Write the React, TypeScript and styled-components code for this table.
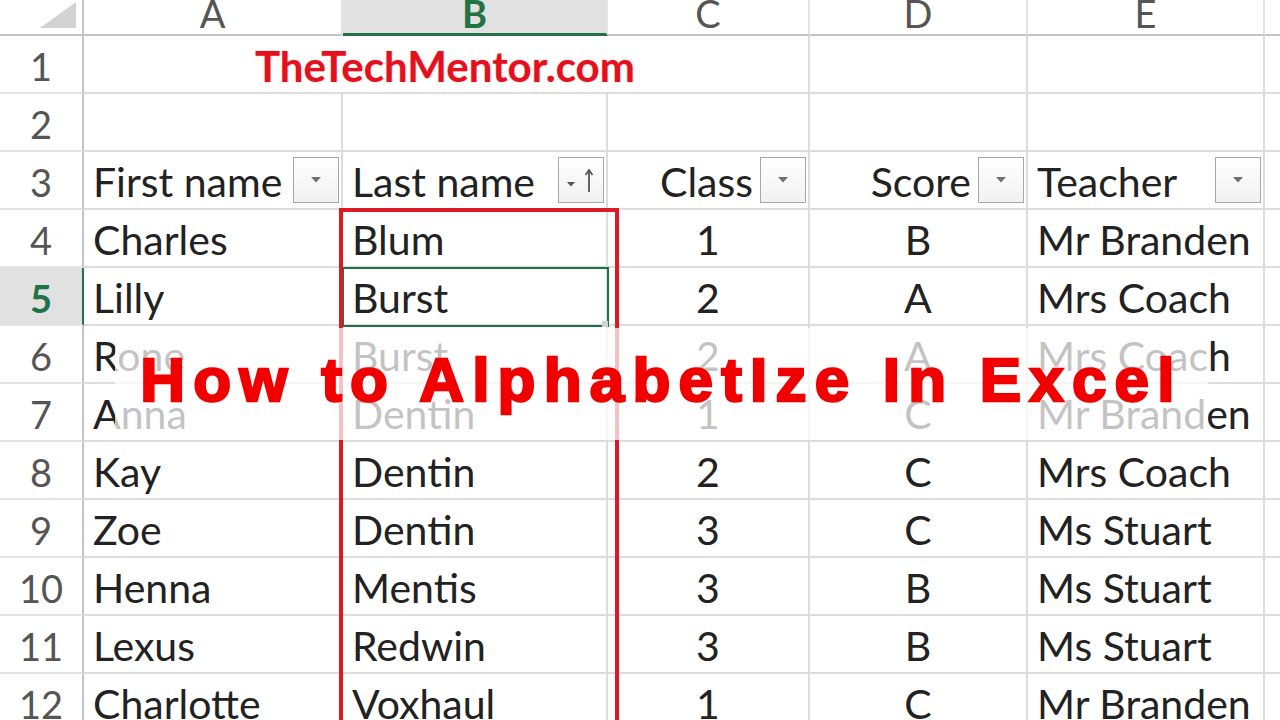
import React from "react";
import styled, { createGlobalStyle, css } from "styled-components";

const GlobalStyle = createGlobalStyle`
  html, body { margin: 0; padding: 0; background: #fff; }
  body { width: 1280px; height: 720px; overflow: hidden; }
`;

const GREEN = "#217346";
const GRID_LINE = "#dcdcdc";
const HEAD_LINE = "#c4c4c4";

type Align = "left" | "center" | "right";

const Sheet = styled.div`
  position: relative;
  width: 1280px;
  height: 720px;
  overflow: hidden;
  background: #fff;
  font-family: Lato, "Open Sans", "Liberation Sans", sans-serif;
`;

const Grid = styled.div`
  display: grid;
  grid-template-columns: 84px 259px 265px 202px 218px 237px 1fr;
  grid-template-rows: 36px repeat(12, 58px);
`;

const Corner = styled.div`
  display: flex;
  align-items: flex-end;
  justify-content: flex-end;
  padding: 0 6px 6px 0;
  box-sizing: border-box;
  border-right: 2px solid ${HEAD_LINE};
  border-bottom: 2px solid ${HEAD_LINE};
`;

const ColHeader = styled.div<{ $active?: boolean; $last?: boolean }>`
  display: flex;
  align-items: flex-end;
  justify-content: center;
  box-sizing: border-box;
  padding-bottom: 2px;
  font-size: 38px;
  line-height: 1;
  color: #555;
  border-right: ${(p) => (p.$last ? "none" : `2px solid #e4e4e4`)};
  border-bottom: 2px solid ${HEAD_LINE};
  ${(p) =>
    p.$active &&
    css`
      background: #e1e1e1;
      color: ${GREEN};
      font-weight: 700;
      border-bottom: 3px solid ${GREEN};
      padding-bottom: 1px;
    `}
`;

const RowHeader = styled.div<{ $active?: boolean }>`
  display: flex;
  align-items: center;
  justify-content: center;
  box-sizing: border-box;
  padding-top: 3px;
  font-size: 38px;
  color: #555;
  border-right: 2px solid ${HEAD_LINE};
  border-bottom: 2px solid #e4e4e4;
  ${(p) =>
    p.$active &&
    css`
      background: #e1e1e1;
      color: ${GREEN};
      font-weight: 700;
      border-right: 2px solid ${GREEN};
    `}
`;

const Cell = styled.div<{ $align?: Align; $selected?: boolean; $noRight?: boolean }>`
  position: relative;
  display: flex;
  align-items: center;
  justify-content: ${(p) =>
    p.$align === "center" ? "center" : p.$align === "right" ? "flex-end" : "flex-start"};
  gap: 7px;
  box-sizing: border-box;
  padding: 3px ${(p) => (p.$align === "right" ? "2px" : "9px")} 0
    ${(p) => (p.$align === "right" ? "0" : "9px")};
  font-size: 41px;
  color: #222;
  white-space: nowrap;
  border-right: ${(p) => (p.$noRight ? "none" : `2px solid ${GRID_LINE}`)};
  border-bottom: 2px solid ${GRID_LINE};
  ${(p) =>
    p.$selected &&
    css`
      outline: 2px solid ${GREEN};
      outline-offset: -1px;
      z-index: 1;
      &::after {
        content: "";
        position: absolute;
        right: -2px;
        bottom: -3px;
        width: 6px;
        height: 6px;
        background: #c9d6cd;
      }
    `}
`;

const HeaderCell = styled(Cell)`
  padding-right: 2px;
  padding-top: 0;
`;

const HeaderLabel = styled.span<{ $grow?: boolean }>`
  flex: ${(p) => (p.$grow ? "1" : "0 0 auto")};
  padding-top: 3px;
`;

const TitleCell = styled.div`
  grid-column: span 3;
  display: flex;
  align-items: center;
  box-sizing: border-box;
  padding: 4px 0 0 171px;
  font-size: 42px;
  font-weight: 700;
  color: #e3111d;
  white-space: nowrap;
  text-shadow: 0 0 2px rgba(255, 160, 160, 0.7);
  border-right: 2px solid ${GRID_LINE};
  border-bottom: 2px solid ${GRID_LINE};
`;

const FilterButton = styled.div`
  flex: 0 0 auto;
  width: 46px;
  height: 46px;
  box-sizing: border-box;
  border: 1.5px solid #a8a8a8;
  background: linear-gradient(#ffffff, #f1f1f1);
  display: flex;
  align-items: center;
  justify-content: center;
`;

const RedFrame = styled.div`
  position: absolute;
  left: 339px;
  top: 208px;
  width: 280px;
  height: 600px;
  box-sizing: border-box;
  border: 4px solid #dc1a23;
  z-index: 2;
  pointer-events: none;
`;

const Band = styled.div`
  position: absolute;
  left: 115px;
  top: 328px;
  width: 1093px;
  height: 112px;
  background: rgba(255, 255, 255, 0.73);
  z-index: 3;
  display: flex;
  align-items: center;
  justify-content: center;
`;

const BigTitle = styled.div`
  font-family: "Liberation Sans", Arial, sans-serif;
  font-weight: 700;
  font-size: 62px;
  letter-spacing: 8.2px;
  color: #f20000;
  -webkit-text-stroke: 2.4px #ee0000;
  text-shadow: 0 0 3px rgba(255, 140, 140, 0.6);
  white-space: nowrap;
  margin-top: -10px;
`;

const Triangle = () => (
  <svg width="36" height="26" viewBox="0 0 36 26">
    <polygon points="0,26 36,26 36,0" fill="#d2d2d2" />
  </svg>
);

const DropIcon = () => (
  <svg width="12" height="8" viewBox="0 0 12 8">
    <polygon points="1,1 11,1 6,6.5" fill="#6f6f6f" />
  </svg>
);

const SortIcon = () => (
  <svg width="36" height="30" viewBox="0 0 36 30">
    <polygon points="4,17 12,17 8,21.5" fill="#555" />
    <line x1="26" y1="6" x2="26" y2="27" stroke="#555" strokeWidth="1.8" />
    <polyline points="22.5,10 26,5 29.5,10" fill="none" stroke="#555" strokeWidth="1.8" />
  </svg>
);

type Col = { label: string; align: Align; sort?: boolean };
const headers: Col[] = [
  { label: "First name", align: "left" },
  { label: "Last name", align: "left", sort: true },
  { label: "Class", align: "right" },
  { label: "Score", align: "right" },
  { label: "Teacher", align: "left" },
];

const dataAlign: Align[] = ["left", "left", "center", "center", "left"];

const rows: string[][] = [
  ["Charles", "Blum", "1", "B", "Mr Branden"],
  ["Lilly", "Burst", "2", "A", "Mrs Coach"],
  ["Rone", "Burst", "2", "A", "Mrs Coach"],
  ["Anna", "Dentin", "1", "C", "Mr Branden"],
  ["Kay", "Dentin", "2", "C", "Mrs Coach"],
  ["Zoe", "Dentin", "3", "C", "Ms Stuart"],
  ["Henna", "Mentis", "3", "B", "Ms Stuart"],
  ["Lexus", "Redwin", "3", "B", "Ms Stuart"],
  ["Charlotte", "Voxhaul", "1", "C", "Mr Branden"],
];

const letters = ["A", "B", "C", "D", "E", ""];

export default function App() {
  return (
    <>
      <GlobalStyle />
      <Sheet>
        <Grid>
          <Corner>
            <Triangle />
          </Corner>
          {letters.map((l, i) => (
            <ColHeader key={i} $active={l === "B"} $last={i === letters.length - 1}>
              {l}
            </ColHeader>
          ))}

          <RowHeader>1</RowHeader>
          <TitleCell>TheTechMentor.com</TitleCell>
          <Cell />
          <Cell />
          <Cell $noRight />

          <RowHeader>2</RowHeader>
          <Cell />
          <Cell />
          <Cell />
          <Cell />
          <Cell />
          <Cell $noRight />

          <RowHeader>3</RowHeader>
          {headers.map((h) => (
            <HeaderCell key={h.label} $align={h.align}>
              <HeaderLabel $grow={h.align === "left"}>{h.label}</HeaderLabel>
              <FilterButton>{h.sort ? <SortIcon /> : <DropIcon />}</FilterButton>
            </HeaderCell>
          ))}
          <Cell $noRight />

          {rows.map((r, ri) => {
            const n = ri + 4;
            return (
              <React.Fragment key={n}>
                <RowHeader $active={n === 5}>{n}</RowHeader>
                {r.map((v, ci) => (
                  <Cell key={ci} $align={dataAlign[ci]} $selected={n === 5 && ci === 1}>
                    {v}
                  </Cell>
                ))}
                <Cell $noRight />
              </React.Fragment>
            );
          })}
        </Grid>
        <RedFrame />
        <Band>
          <BigTitle>How to AlphabetIze In Excel</BigTitle>
        </Band>
      </Sheet>
    </>
  );
}
